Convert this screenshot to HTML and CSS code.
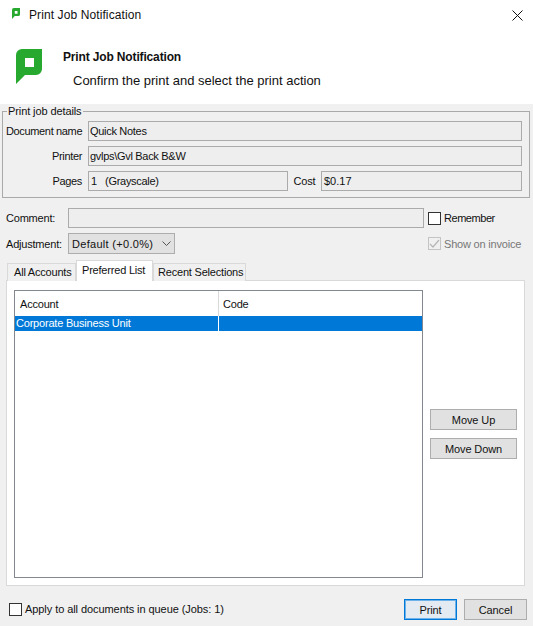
FILE: index.html
```html
<!DOCTYPE html>
<html>
<head>
<meta charset="UTF-8">
<title>Print Job Notification</title>
<link rel="stylesheet" href="styles.css">
</head>
<body>
<div class="window">

    <div class="titlebar">
        <svg class="title-logo" viewBox="0 0 26 35"><path fill-rule="evenodd" fill="#27a82f" d="M6 0H26V20a6 6 0 0 1-6 6H9L0 35V6a6 6 0 0 1 6-6ZM9 9V18H18V9Z"/></svg>
        <span class="title-text">Print Job Notification</span>
        <svg class="close" viewBox="0 0 11 11"><path d="M.5.5l10 10M10.5.5l-10 10" stroke="#111" stroke-width="1" fill="none"/></svg>
    </div>

    <div class="banner">
        <svg class="logo" viewBox="0 0 26 35"><path fill-rule="evenodd" fill="#27a82f" d="M6 0H26V20a6 6 0 0 1-6 6H9L0 35V6a6 6 0 0 1 6-6ZM9 9V18H18V9Z"/></svg>
        <div class="banner-text">
            <div class="banner-head">Print Job Notification</div>
            <div class="banner-sub">Confirm the print and select the print action</div>
        </div>
    </div>

    <div class="content">
        <fieldset class="details">
            <legend>Print job details</legend>
            <div class="row">
                <label class="row-label">Document name</label>
                <div class="field grow">Quick Notes</div>
            </div>
            <div class="row">
                <label class="row-label">Printer</label>
                <div class="field grow">gvlps\Gvl Back B&amp;W</div>
            </div>
            <div class="row">
                <label class="row-label">Pages</label>
                <div class="field pages">1&nbsp;&nbsp; (Grayscale)</div>
                <label class="cost-label">Cost</label>
                <div class="field grow cost">$0.17</div>
            </div>
        </fieldset>

        <div class="options">
            <div class="option-row">
                <label class="option-label">Comment:</label>
                <div class="field comment"></div>
                <span class="check"></span>
                <span class="remember">Remember</span>
            </div>
            <div class="option-row adjust-row">
                <label class="option-label">Adjustment:</label>
                <div class="select">
                    <span>Default (+0.0%)</span>
                    <svg class="chevron" viewBox="0 0 9 5"><path d="M.5.5l4 4 4-4" stroke="#555" fill="none"/></svg>
                </div>
                <span class="check disabled">
                    <svg viewBox="0 0 11 11"><path d="M1 6l3 3 6-7" stroke="#b5b5b5" stroke-width="1.2" fill="none"/></svg>
                </span>
                <span class="muted">Show on invoice</span>
            </div>
        </div>

        <div class="tabs">
            <div class="tab first">All Accounts</div>
            <div class="tab active">Preferred List</div>
            <div class="tab last">Recent Selections</div>
        </div>
        <div class="panel">
            <div class="table">
                <div class="table-head">
                    <div class="col-account">Account</div>
                    <div class="col-code">Code</div>
                </div>
                <div class="table-row">
                    <div class="col-account">Corporate Business Unit</div>
                    <div class="col-code"></div>
                </div>
            </div>
            <div class="side-buttons">
                <button type="button" class="btn">Move Up</button>
                <button type="button" class="btn">Move Down</button>
            </div>
        </div>

        <div class="footer">
            <span class="check"></span>
            <span class="apply">Apply to all documents in queue (Jobs: 1)</span>
            <button type="button" class="btn primary">Print</button>
            <button type="button" class="btn cancel">Cancel</button>
        </div>
    </div>
</div>
</body>
</html>
```

FILE: styles.css
```css
* {
    box-sizing: border-box;
}

body {
    margin: 0;
    background-color: #fff;
    color: #111;
    font-family: "Liberation Sans", Arial, sans-serif;
    font-size: 11px;
    letter-spacing: -0.2px;
    white-space: nowrap;
}

.window {
    width: 533px;
    height: 626px;
    display: flex;
    flex-direction: column;
    overflow: hidden;
}

/* title bar */
.titlebar {
    height: 30px;
    display: flex;
    align-items: center;
    padding: 0 10px 0 12px;
    flex: none;
}

.title-logo {
    width: 8px;
    height: 11px;
    margin: -3px 9px 0 0;
}

.title-text {
    font-size: 12px;
    letter-spacing: 0.1px;
    flex: 1;
}

.close {
    width: 11px;
    height: 11px;
}

/* banner */
.banner {
    height: 74px;
    display: flex;
    padding: 19px 0 0 16px;
    flex: none;
}

.logo {
    width: 26px;
    height: 35px;
}

.banner-text {
    margin-left: 21px;
}

.banner-head {
    font-weight: bold;
    font-size: 12px;
    line-height: 14px;
    letter-spacing: -0.15px;
    margin-top: 1px;
}

.banner-sub {
    font-size: 13px;
    line-height: 15px;
    letter-spacing: 0;
    margin: 9px 0 0 10px;
}

/* main area */
.content {
    flex: 1;
    background-color: #f0f0f0;
    padding-top: 1px;
    display: flex;
    flex-direction: column;
}

.details {
    margin: 0 3px 0 2px;
    padding: 3px 7px 0 3px;
    height: 93px;
    border: 1px solid #a9a9a9;
}

.details legend {
    padding: 0 1px;
    margin-left: 1px;
    line-height: 13px;
    letter-spacing: -0.1px;
}

.row {
    display: flex;
    align-items: center;
    height: 20px;
    margin-bottom: 5px;
}

.row-label {
    width: 76px;
    text-align: right;
    margin-right: 6px;
    letter-spacing: -0.35px;
}

.field {
    height: 20px;
    line-height: 18px;
    border: 1px solid #ababab;
    background-color: #eeeeee;
    padding: 0 2px 0 1px;
    letter-spacing: -0.3px;
}

.grow {
    flex: 1;
}

.pages {
    width: 200px;
    padding-left: 2px;
}

.cost {
    padding-left: 2px;
    letter-spacing: 0;
}

.cost-label {
    width: 33px;
    text-align: center;
}

.options {
    padding: 10px 0 0 6px;
}

.option-row {
    display: flex;
    align-items: center;
    height: 20px;
}

.adjust-row {
    height: 21px;
    margin-top: 5px;
}

.option-label {
    width: 62px;
}

.comment {
    width: 356px;
    margin-right: 4px;
}

.check {
    width: 13px;
    height: 13px;
    border: 1px solid #333;
    background-color: #fff;
    margin-right: 3px;
    flex: none;
}

.check.disabled {
    border-color: #c4c4c4;
    background-color: #f0f0f0;
    display: flex;
}

.remember {
    letter-spacing: -0.45px;
}

.muted {
    color: #777;
}

.select {
    width: 107px;
    height: 21px;
    margin-right: 253px;
    border: 1px solid #adadad;
    background-color: #e1e1e1;
    display: flex;
    align-items: center;
    justify-content: space-between;
    padding: 0 3px 0 3px;
    letter-spacing: 0.3px;
}

.chevron {
    width: 9px;
    height: 5px;
}

/* tabs */
.tabs {
    display: flex;
    align-items: flex-end;
    height: 21px;
    margin: 6px 0 0 7px;
    position: relative;
    z-index: 1;
}

.tab {
    height: 18px;
    line-height: 16px;
    padding: 0 3px 0 6px;
    border: 1px solid #d9d9d9;
    border-bottom: none;
    background-color: #f0f0f0;
}

.tab.first {
    width: 69px;
}

.tab.active {
    height: 21px;
    width: 77px;
    background-color: #fff;
    line-height: 18px;
    padding-left: 5px;
}

.tab.last {
    padding-left: 4px;
    width: 93px;
}

.panel {
    height: 306px;
    margin: -1px 8px 0 6px;
    border: 1px solid #d9d9d9;
    background-color: #fff;
    padding: 9px 7px 7px 7px;
    display: flex;
}

.table {
    width: 409px;
    height: 288px;
    border: 1px solid #828790;
    flex: none;
}

.table-head {
    display: flex;
    height: 25px;
    line-height: 26px;
}

.col-account {
    width: 204px;
    padding-left: 5px;
    border-right: 1px solid #d9d9d9;
}

.col-code {
    padding-left: 4px;
    flex: 1;
}

.table-row {
    display: flex;
    height: 15px;
    line-height: 15px;
    background-color: #0078d7;
    color: #fff;
}

.table-row .col-account {
    padding-left: 1px;
    border-right-color: #fff;
}

.side-buttons {
    display: flex;
    flex-direction: column;
    gap: 8px;
    margin: 119px 0 0 7px;
}

.btn {
    width: 87px;
    height: 21px;
    padding: 0;
    border: 1px solid #adadad;
    background-color: #e1e1e1;
    color: #111;
    font-family: inherit;
    font-size: 11px;
    letter-spacing: -0.1px;
}

/* footer */
.footer {
    display: flex;
    align-items: center;
    height: 21px;
    margin-top: 13px;
    padding-left: 9px;
}

.apply {
    width: 379px;
    letter-spacing: -0.07px;
    margin-top: -1px;
}

.primary {
    width: 53px;
    border: 1px solid #0078d7;
    box-shadow: inset 0 0 0 1px #6db3ea;
    background-color: #e3eaf2;
    margin-right: 7px;
}

.cancel {
    width: 63px;
}
```
